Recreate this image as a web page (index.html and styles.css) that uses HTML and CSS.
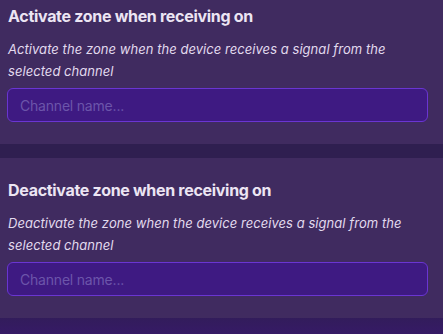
FILE: index.html
```html
<!DOCTYPE html>
<html>

<head>
  <meta charset="utf-8">
  <link rel="stylesheet" href="styles.css">
</head>

<body>

<div class="settings-list">
  <section class="setting">
    <h2 class="setting-title">Activate zone when receiving on</h2>
    <p class="setting-description">Activate the zone when the device receives a signal from the selected channel</p>
    <input class="setting-input" type="text" placeholder="Channel name..."/>
  </section>

  <section class="setting">
    <h2 class="setting-title">Deactivate zone when receiving on</h2>
    <p class="setting-description">Deactivate the zone when the device receives a signal from the selected channel</p>
    <input class="setting-input" type="text" placeholder="Channel name..."/>
  </section>
</div>

</body>

</html>
```

FILE: styles.css
```css
html, body {
  height: 100%;
}

body {
  margin: 0;
  overflow: hidden;
  background: linear-gradient(to bottom, #2f1f50 90%, #361a66);
  font-family: Inter, "Noto Sans", sans-serif;
  color: #ebe4f3;
}

.settings-list {
  display: flex;
  flex-direction: column;
  gap: 14px;
  margin-top: -16px;
}

.setting {
  display: flex;
  flex-direction: column;
  padding: 20px 15px 22px 7px;
  background-color: #402b60;
}

.setting-title {
  margin: 0 0 0 1px;
  font-size: 16px;
  line-height: 24px;
  font-weight: 700;
  letter-spacing: -0.3px;
  color: #ece5f3;
}

.setting-description {
  margin: 10px 0 6px 1px;
  font-size: 13px;
  line-height: 22px;
  font-style: italic;
  letter-spacing: 0.05px;
  color: #e2daee;
}

.setting-input {
  box-sizing: border-box;
  height: 34px;
  padding: 0 12px;
  border: 1px solid #6a35d2;
  border-radius: 6px;
  background-color: #3e1a82;
  font-family: inherit;
  font-size: 14px;
  letter-spacing: -0.2px;
  color: #e2daee;
  outline: none;
}

.setting-input::placeholder {
  color: #6c55aa;
}
```
